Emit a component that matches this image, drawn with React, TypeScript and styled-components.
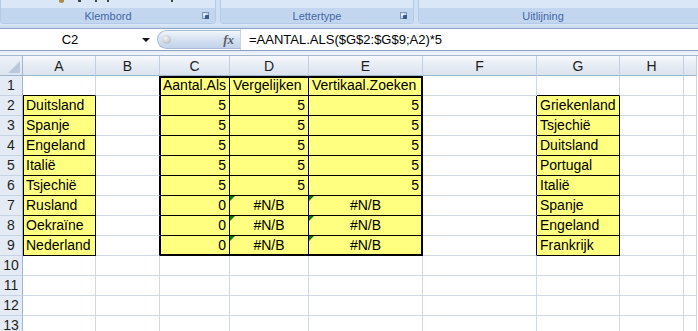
import React from "react";
import styled, { createGlobalStyle } from "styled-components";

const GlobalStyle = createGlobalStyle`
  html, body {
    margin: 0;
    padding: 0;
    background: #ffffff;
    overflow: hidden;
  }
  body {
    font-family: "Liberation Sans", Arial, sans-serif;
  }
`;

// row header + columns A..H, plus the sliver of column I at the window edge
const COLS = [23, 73, 64, 70, 79, 114, 114, 83, 64, 13];
const LETTERS = ["A", "B", "C", "D", "E", "F", "G", "H", ""];
const ROWS = 13;
const GRID = "#d0d7e5";

type Value = string | number;

const columnA: Value[] = ["", "Duitsland", "Spanje", "Engeland", "Italië", "Tsjechië", "Rusland", "Oekraïne", "Nederland"];
const columnC: Value[] = ["Aantal.Als", 5, 5, 5, 5, 5, 0, 0, 0];
const columnD: Value[] = ["Vergelijken", 5, 5, 5, 5, 5, "#N/B", "#N/B", "#N/B"];
const columnE: Value[] = ["Vertikaal.Zoeken", 5, 5, 5, 5, 5, "#N/B", "#N/B", "#N/B"];
const columnG: Value[] = ["", "Griekenland", "Tsjechië", "Duitsland", "Portugal", "Italië", "Spanje", "Engeland", "Frankrijk"];

const data: Record<number, Value[]> = { 0: columnA, 2: columnC, 3: columnD, 4: columnE, 6: columnG };

// bordered ranges: [col from, col to, row from, row to, thick outline]
const ranges: [number, number, number, number, boolean][] = [
  [0, 0, 2, 9, false],
  [2, 4, 1, 9, true],
  [6, 6, 2, 9, false],
];

const inRange = (r: number, c: number) =>
  ranges.find(([c0, c1, r0, r1]) => c >= c0 && c <= c1 && r >= r0 && r <= r1);

function App() {
  return (
    <>
      <GlobalStyle />
      <Window>
        <Ribbon>
          <Group $width={216}>
            <Controls>
              <PasteIcon />
              <Tick $w={3} />
              <Tick $w={2} $gap={14} />
              <Tick $w={2} $gap={10} />
              <Tick $w={2} $gap={62} />
            </Controls>
            <GroupLabel>
              <span>Klembord</span>
              <Launcher />
            </GroupLabel>
          </Group>
          <Group $width={194}>
            <Controls />
            <GroupLabel>
              <span>Lettertype</span>
              <Launcher />
            </GroupLabel>
          </Group>
          <Group $width={290}>
            <Controls />
            <GroupLabel $offset={-20}>
              <span>Uitlijning</span>
            </GroupLabel>
          </Group>
        </Ribbon>
        <RibbonFoot />

        <FormulaBar>
          <NameBox>
            <NameText>C2</NameText>
            <DropArrow />
          </NameBox>
          <FxPill>
            <Knob />
            <Fx>fx</Fx>
          </FxPill>
          <FormulaInput>=AANTAL.ALS($G$2:$G$9;A2)*5</FormulaInput>
        </FormulaBar>
        <SheetGap />

        <Sheet $cols={COLS}>
          <Corner>
            <CornerMark />
          </Corner>
          {LETTERS.map((l, i) => (
            <ColHeader key={i}>{l}</ColHeader>
          ))}
          {Array.from({ length: ROWS }, (_, i) => i + 1).map((r) => (
            <React.Fragment key={r}>
              <RowHeader>{r}</RowHeader>
              {LETTERS.map((_, c) => {
                const own = inRange(r, c);
                const right = own || inRange(r, c + 1);
                const below = own || inRange(r + 1, c);
                const shadows: string[] = [];
                if (own && own[4]) {
                  if (c === own[0]) shadows.push("inset 1px 0 0 #000");
                  if (c === own[1]) shadows.push("inset -1px 0 0 #000");
                  if (r === own[2]) shadows.push("inset 0 2px 0 #000");
                  if (r === own[3]) shadows.push("inset 0 -1px 0 #000");
                }
                if (own && c === 0) shadows.push("inset 1px 0 0 #000");
                const value = data[c]?.[r - 1];
                const isNum = typeof value === "number";
                const isErr = typeof value === "string" && value.startsWith("#");
                const flagged = (c === 3 || c === 4) && r >= 7 && r <= 9;
                return (
                  <Cell
                    key={c}
                    $fill={!!own}
                    $right={right ? "#000" : GRID}
                    $bottom={below ? "#000" : GRID}
                    $shadow={shadows.join(", ") || "none"}
                    $align={isNum ? "flex-end" : isErr ? "center" : "flex-start"}
                  >
                    {flagged && <ErrorFlag />}
                    {value !== undefined && value !== "" && <CellText>{value}</CellText>}
                  </Cell>
                );
              })}
            </React.Fragment>
          ))}
        </Sheet>
      </Window>
    </>
  );
}

const Window = styled.div`
  width: 698px;
  height: 331px;
  overflow: hidden;
  display: flex;
  flex-direction: column;
  background: #ffffff;
`;

const Ribbon = styled.div`
  height: 24px;
  display: flex;
  gap: 4px;
  background: #cfe0f4;
  flex-shrink: 0;
`;

const Group = styled.div<{ $width: number }>`
  width: ${(p) => p.$width}px;
  flex-shrink: 0;
  display: flex;
  flex-direction: column;
  border: 1px solid #b3cbe8;
  border-top: none;
  border-radius: 0 0 4px 4px;
  overflow: hidden;
  box-sizing: border-box;
`;

const Controls = styled.div`
  height: 8px;
  background: #d9e7f7;
  display: flex;
  align-items: flex-start;
  padding-left: 58px;
  overflow: hidden;
`;

const PasteIcon = styled.div`
  width: 5px;
  height: 3px;
  background: #b08a3a;
  border-radius: 0 0 3px 3px;
`;

const Tick = styled.div<{ $w: number; $gap?: number }>`
  width: ${(p) => p.$w}px;
  height: 2px;
  margin-left: ${(p) => p.$gap ?? 14}px;
  background: #444;
`;

const GroupLabel = styled.div<{ $offset?: number }>`
  flex: 1;
  background: #c2d7ef;
  display: flex;
  align-items: center;
  justify-content: center;
  position: relative;
  font-family: "Liberation Sans", Arial, sans-serif;
  font-size: 11px;
  color: #4565a8;
  span {
    transform: translateX(${(p) => p.$offset ?? 0}px);
  }
`;

const LauncherSvg = styled.svg`
  position: absolute;
  right: 5px;
  top: 4px;
`;

function Launcher() {
  return (
    <LauncherSvg width="8" height="8" viewBox="0 0 8 8">
      <rect x="0.5" y="0.5" width="6" height="6" fill="none" stroke="#7f93b3" />
      <rect x="3" y="3" width="4" height="4" fill="#3f5a85" />
      <rect x="1.5" y="1.5" width="2" height="2" fill="#ffffff" />
    </LauncherSvg>
  );
}

const RibbonFoot = styled.div`
  height: 4px;
  background: linear-gradient(#dde9f7, #c5d8ef);
  border-bottom: 1px solid #8fa6c6;
  flex-shrink: 0;
`;

const FormulaBar = styled.div`
  height: 21px;
  display: flex;
  align-items: stretch;
  background: #ffffff;
  border-bottom: 1px solid #8da3c3;
  flex-shrink: 0;
`;

const NameBox = styled.div`
  width: 155px;
  display: flex;
  align-items: center;
`;

const NameText = styled.span`
  width: 140px;
  text-align: center;
  font-size: 13px;
  color: #000;
`;

const DropArrow = styled.div`
  width: 0;
  height: 0;
  border-left: 4px solid transparent;
  border-right: 4px solid transparent;
  border-top: 4px solid #111;
  margin-left: 2px;
`;

const FxPill = styled.div`
  width: 83px;
  margin: 1px 0 1px 2px;
  border-radius: 10px 0 0 10px;
  background: linear-gradient(#f2f6fb, #d3e0f0 55%, #c2d3ea);
  border: 1px solid #a8bcd8;
  border-right: none;
  display: flex;
  align-items: center;
  justify-content: space-between;
  padding: 0 6px 0 4px;
  box-sizing: border-box;
`;

const Knob = styled.div`
  width: 9px;
  height: 9px;
  border-radius: 50%;
  background: radial-gradient(circle at 40% 35%, #f4f4f4, #a9b0ba);
`;

const Fx = styled.span`
  font-family: "Liberation Serif", "Times New Roman", serif;
  font-style: italic;
  font-weight: bold;
  font-size: 13px;
  color: #59606b;
`;

const FormulaInput = styled.div`
  flex: 1;
  display: flex;
  align-items: center;
  padding-left: 8px;
  font-size: 13px;
  color: #000;
  white-space: nowrap;
  border-left: 1px solid #c6d4e6;
`;

const SheetGap = styled.div`
  height: 4px;
  background: linear-gradient(#e3eaf5, #f4f7fb);
  flex-shrink: 0;
`;

const Sheet = styled.div<{ $cols: number[] }>`
  display: grid;
  grid-template-columns: ${(p) => p.$cols.map((c) => `${c}px`).join(" ")};
  grid-auto-rows: 20px;
  border-top: 1px solid #9eb6ce;
`;

const Corner = styled.div`
  background: linear-gradient(#eef2f8, #dce4ef);
  border-right: 1px solid #9eb6ce;
  border-bottom: 1px solid #9eb6ce;
  box-sizing: border-box;
  position: relative;
`;

const CornerMark = styled.div`
  position: absolute;
  right: 2px;
  bottom: 2px;
  width: 0;
  height: 0;
  border-left: 12px solid transparent;
  border-bottom: 12px solid #b9c8db;
`;

const ColHeader = styled.div`
  background: linear-gradient(#f7f9fc, #e4eaf3 60%, #dbe3ee);
  border-right: 1px solid #c0cfe1;
  border-bottom: 1px solid #9eb6ce;
  box-sizing: border-box;
  display: flex;
  align-items: center;
  justify-content: center;
  font-size: 14px;
  color: #1e1e1e;
`;

const RowHeader = styled.div`
  background: #e4ebf5;
  border-right: 1px solid #9eb6ce;
  border-bottom: 1px solid #c5d3e4;
  box-sizing: border-box;
  display: flex;
  align-items: flex-end;
  justify-content: center;
  padding-bottom: 2px;
  font-size: 14px;
  color: #1e1e1e;
`;

const Cell = styled.div<{
  $fill: boolean;
  $right: string;
  $bottom: string;
  $shadow: string;
  $align: string;
}>`
  position: relative;
  box-sizing: border-box;
  background: ${(p) => (p.$fill ? "#ffff80" : "#ffffff")};
  border-right: 1px solid ${(p) => p.$right};
  border-bottom: 1px solid ${(p) => p.$bottom};
  box-shadow: ${(p) => p.$shadow};
  display: flex;
  align-items: flex-end;
  justify-content: ${(p) => p.$align};
  padding: 0 3px 2px 3px;
  white-space: nowrap;
`;

const CellText = styled.span`
  font-family: "Liberation Sans", Arial, sans-serif;
  font-size: 14px;
  line-height: 16px;
  color: #000;
`;

const ErrorFlag = styled.div`
  position: absolute;
  left: 0;
  top: 0;
  width: 0;
  height: 0;
  border-top: 5px solid #0a7a0a;
  border-right: 5px solid transparent;
`;

export default App;
